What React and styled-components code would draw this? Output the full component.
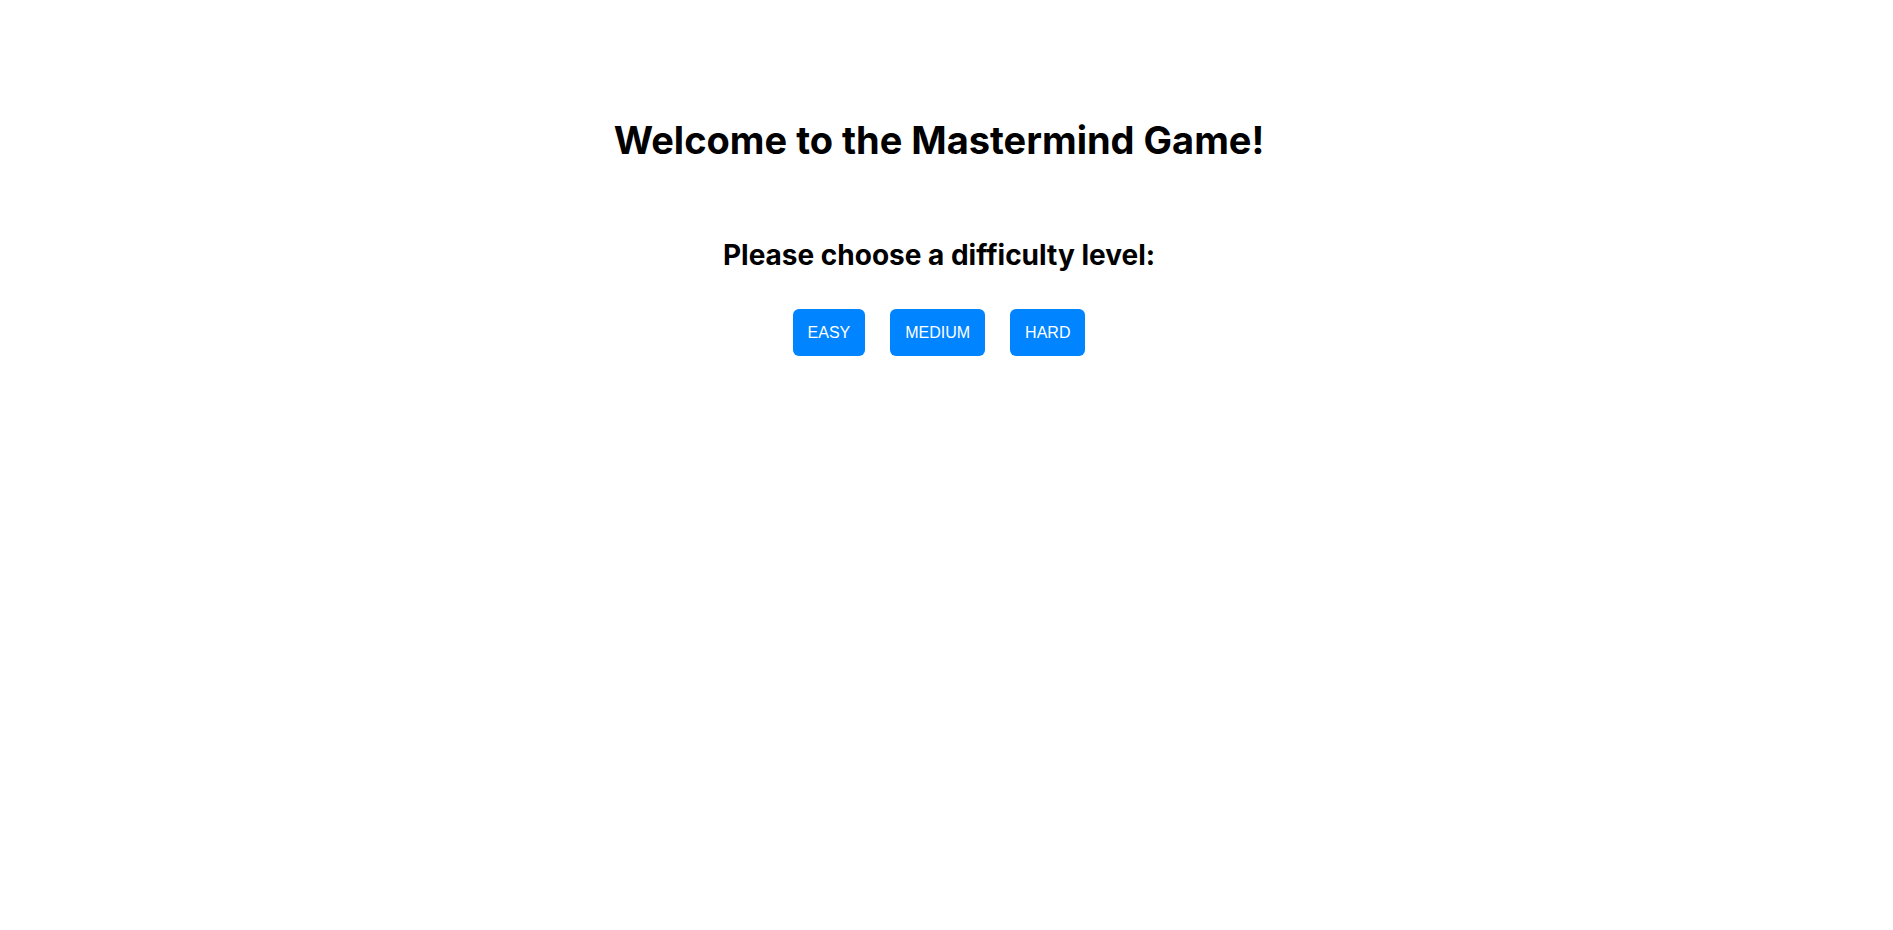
import styled, { createGlobalStyle } from "styled-components";

const GlobalStyle = createGlobalStyle`
  html, body {
    margin: 0;
    padding: 0;
    background: #ffffff;
  }
  body {
    font-family: Inter, "Noto Sans", sans-serif;
    color: #000000;
  }
`;

const Screen = styled.main`
  display: flex;
  flex-direction: column;
  align-items: center;
  padding: 121px 15px 0 0;
  min-height: 100vh;
  box-sizing: border-box;
`;

const Title = styled.h1`
  margin: 0;
  font-size: 38px;
  line-height: 1;
  font-weight: 700;
`;

const Prompt = styled.h2`
  margin: 82px 0 0;
  font-size: 28px;
  line-height: 1;
  font-weight: 700;
`;

const Levels = styled.div`
  display: flex;
  gap: 25px;
  margin-top: 40px;
`;

const LevelButton = styled.button`
  padding: 14px 15px;
  border: none;
  border-radius: 6px;
  background: #0084ff;
  color: #ffffff;
  font-family: "Liberation Sans", Arial, sans-serif;
  font-size: 16px;
  line-height: 19px;
  cursor: pointer;
`;

const levels = ["EASY", "MEDIUM", "HARD"];

export default function App() {
  return (
    <>
      <GlobalStyle />
      <Screen>
        <Title>Welcome to the Mastermind Game!</Title>
        <Prompt>Please choose a difficulty level:</Prompt>
        <Levels>
          {levels.map((level) => (
            <LevelButton key={level}>{level}</LevelButton>
          ))}
        </Levels>
      </Screen>
    </>
  );
}
